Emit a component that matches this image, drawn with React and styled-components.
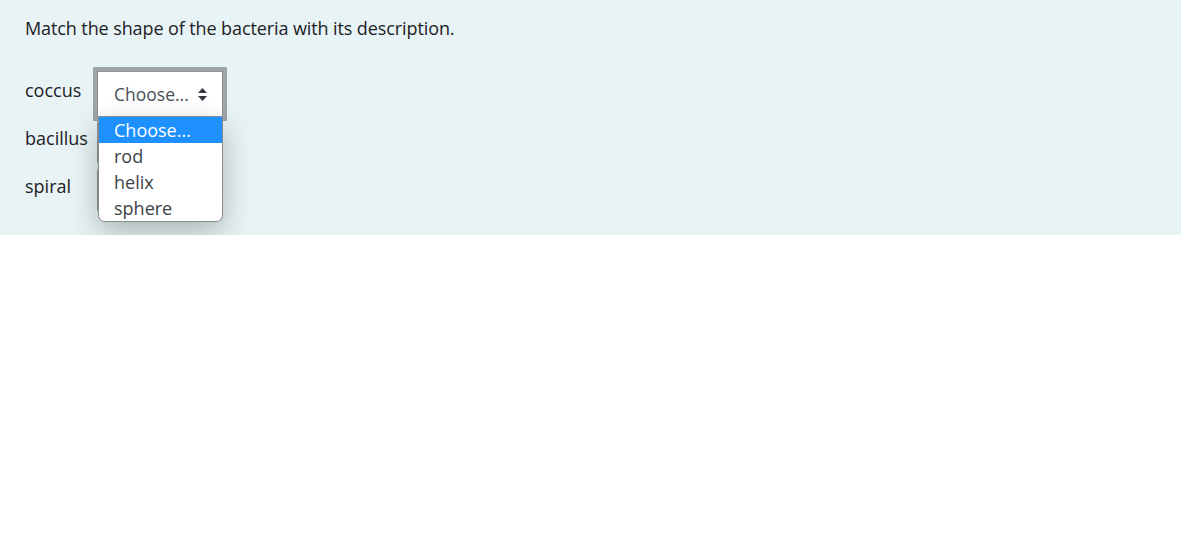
import styled, { createGlobalStyle } from "styled-components";

const GlobalStyle = createGlobalStyle`
  html, body {
    margin: 0;
    padding: 0;
    background: #fff;
  }
  body {
    font-family: "Open Sans", "Noto Sans", sans-serif;
    color: #1d2125;
  }
`;

const questions = [
  { label: "coccus", open: true },
  { label: "bacillus" },
  { label: "spiral" },
];

const options = ["Choose...", "rod", "helix", "sphere"];

export default function App() {
  return (
    <>
      <GlobalStyle />
      <Panel>
        <Prompt>Match the shape of the bacteria with its description.</Prompt>
        <Rows>
          {questions.map((q) => (
            <Row key={q.label}>
              <Label>{q.label}</Label>
              <SelectWrap>
                <Select $focused={q.open}>
                  <SelectText>Choose...</SelectText>
                  <Arrows />
                </Select>
                {q.open && (
                  <Menu>
                    {options.map((o, i) => (
                      <Option key={o} $active={i === 0}>
                        {o}
                      </Option>
                    ))}
                  </Menu>
                )}
              </SelectWrap>
            </Row>
          ))}
        </Rows>
      </Panel>
    </>
  );
}

function Arrows() {
  return (
    <svg width="9" height="13" viewBox="0 0 9 13">
      <path d="M4.5 0 L9 5 L0 5 Z" fill="#343a40" />
      <path d="M4.5 13 L9 8 L0 8 Z" fill="#343a40" />
    </svg>
  );
}

const Panel = styled.div`
  width: 1181px;
  box-sizing: border-box;
  background: #e7f3f5;
  padding: 17px 25px 22px 25px;
`;

const Prompt = styled.p`
  margin: 0;
  font-size: 18px;
  line-height: 22px;
  letter-spacing: -0.1px;
`;

const Rows = styled.div`
  margin-top: 32px;
  display: flex;
  flex-direction: column;
  gap: 2px;
`;

const Row = styled.div`
  display: flex;
  align-items: flex-start;
  height: 46px;
`;

const Label = styled.div`
  width: 72px;
  padding-top: 8px;
  font-size: 18px;
  line-height: 22px;
  white-space: nowrap;
`;

const SelectWrap = styled.div`
  position: relative;
`;

const Select = styled.div`
  box-sizing: border-box;
  width: 126px;
  height: 46px;
  display: flex;
  align-items: center;
  justify-content: space-between;
  padding: 0 15px 0 16px;
  background: #fff;
  border: 1px solid ${(p) => (p.$focused ? "#8f9397" : "#8f959e")};
  border-radius: ${(p) => (p.$focused ? "0" : "4px")};
  box-shadow: ${(p) => (p.$focused ? "0 0 0 4px #9fa4a7" : "none")};
  font-size: 17.5px;
  color: #495057;
`;

const SelectText = styled.span`
  line-height: 22px;
  white-space: nowrap;
`;

const Menu = styled.div`
  position: absolute;
  top: 46px;
  left: 1px;
  width: 125px;
  box-sizing: border-box;
  background: #fff;
  border: 1px solid #8a8a8a;
  border-top: none;
  border-radius: 0 0 7px 7px;
  box-shadow: 0 10px 30px rgba(0, 0, 0, 0.26);
  overflow: hidden;
  z-index: 2;
`;

const Option = styled.div`
  height: 26px;
  line-height: 26px;
  padding-left: 15px;
  font-size: 18px;
  color: ${(p) => (p.$active ? "#fff" : "#3c4248")};
  background: ${(p) => (p.$active ? "#1e90ff" : "#fff")};
`;
